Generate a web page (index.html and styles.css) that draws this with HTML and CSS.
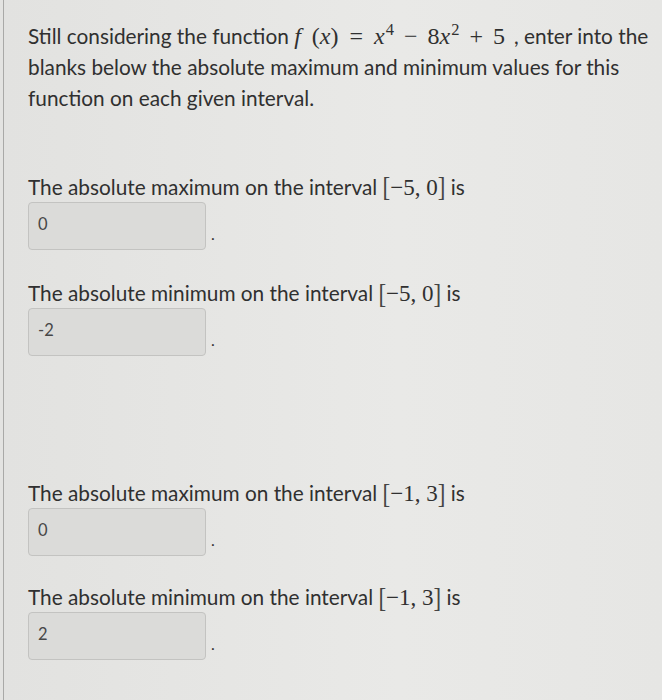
FILE: index.html
```html
<!DOCTYPE html>
<html>
<head>
<meta charset="utf-8">
<link rel="stylesheet" href="styles.css">
</head>
<body>
<div class="page">
  <div class="content">
    <p class="intro">Still considering the function <span class="math"><i class="fn">f</i>(<i>x</i>)<span class="rel">=</span><i>x</i><sup>4</sup><span class="bin">−</span>8<i>x</i><sup>2</sup><span class="bin">+</span><span class="last">5</span></span>, enter into the blanks below the absolute maximum and minimum values for this function on each given interval.</p>

    <div class="q q1">
      <div class="label">The absolute maximum on the interval <span class="math int"><span class="br">[</span>−5, 0<span class="br">]</span></span> is</div>
      <div class="row"><div class="box">0</div><span class="dot">.</span></div>
    </div>

    <div class="q q2">
      <div class="label">The absolute minimum on the interval <span class="math int"><span class="br">[</span>−5, 0<span class="br">]</span></span> is</div>
      <div class="row"><div class="box">-2</div><span class="dot">.</span></div>
    </div>

    <div class="q q3">
      <div class="label">The absolute maximum on the interval <span class="math int"><span class="br">[</span>−1, 3<span class="br">]</span></span> is</div>
      <div class="row"><div class="box">0</div><span class="dot">.</span></div>
    </div>

    <div class="q q4">
      <div class="label">The absolute minimum on the interval <span class="math int"><span class="br">[</span>−1, 3<span class="br">]</span></span> is</div>
      <div class="row"><div class="box">2</div><span class="dot">.</span></div>
    </div>
  </div>
</div>
</body>
</html>
```
FILE: styles.css
```css
html, body {
  margin: 0;
  padding: 0;
}
body {
  background: #e3e3e1;
  font-family: Lato, "Noto Sans", sans-serif;
  color: #303030;
  width: 662px;
  height: 700px;
  overflow: hidden;
}
.page {
  margin-left: 3px;
  border-left: 1px solid #a9a9a7;
  height: 700px;
  background: linear-gradient(90deg, #e2e2e0 0%, #e9e9e7 60%, #e6e6e4 100%);
}
.content {
  padding-left: 24px;
  padding-top: 20px;
}
.intro {
  margin: 0;
  font-size: 20.8px;
  line-height: 31px;
  width: 634px;
}
.math {
  font-family: "Liberation Serif", "DejaVu Serif", serif;
  font-size: 24px;
  line-height: 1;
}
.math sup {
  font-size: 16.5px;
  line-height: 0;
  margin-left: 1px;
}
.fn {
  margin-right: 11px;
}
.rel {
  margin: 0 11px;
}
.bin {
  margin: 0 10px;
}
.last {
  margin-right: 9px;
}
.label {
  font-size: 20.8px;
  line-height: 30px;
}
.int {
  font-size: 23px;
}
.br {
  display: inline-block;
  transform: scaleY(1.2);
  color: #444;
}
.q1 { margin-top: 59px; }
.q2 { margin-top: 28px; }
.q3 { margin-top: 122px; }
.q4 { margin-top: 26px; }
.row {
  display: flex;
  align-items: flex-end;
}
.box {
  width: 157px;
  height: 46px;
  padding-left: 9px;
  padding-right: 10px;
  background: #dbdbd9;
  border: 1px solid #c3c3c1;
  border-radius: 4px;
  font-size: 16.5px;
  line-height: 42px;
  color: #474747;
  box-sizing: content-box;
}
.dot {
  font-size: 16px;
  line-height: 16px;
  margin-left: 5px;
  padding-bottom: 8px;
  color: #333;
}
```
